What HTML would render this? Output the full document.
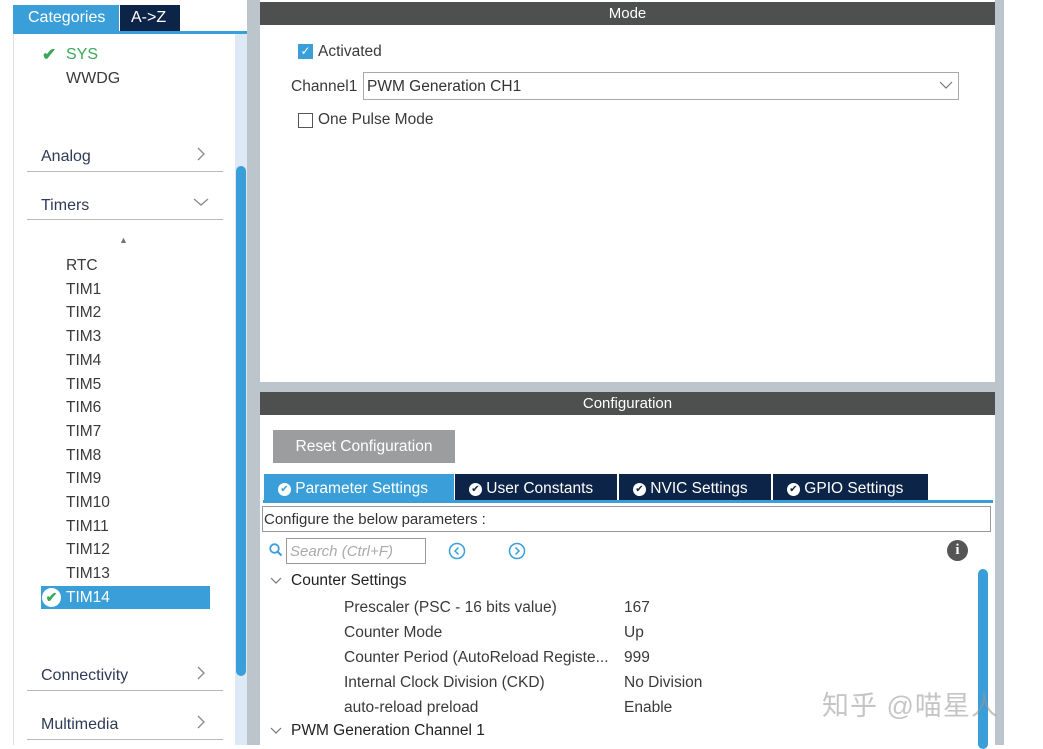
<!DOCTYPE html>
<html><head><meta charset="utf-8"><style>
*{margin:0;padding:0;box-sizing:border-box}
body{width:1043px;height:745px;overflow:hidden;background:#fff;font-family:"Liberation Sans",Arial,sans-serif;position:relative;color:#333}
.a{position:absolute;white-space:nowrap}
.t{font-size:15px;color:#3a3a3a}
.cat{font-size:16px;color:#2f3a56}
.line{position:absolute;height:1px;background:#b8b8b8}
svg.a{overflow:visible}
</style></head><body>
<!-- left panel -->
<div class="a" style="left:13px;top:33px;width:222px;height:712px;background:#fff;border-left:1px solid #e0e0e0"></div>
<div class="a" style="left:13px;top:5px;width:106px;height:26px;background:#3a9fd8;color:#fff;font-size:16px;padding:4px 0 0 15px">Categories</div>
<div class="a" style="left:120px;top:5px;width:60px;height:26px;background:#0c2447;color:#fff;font-size:16px;padding:4px 0 0 11px">A-&gt;Z</div>
<div class="a" style="left:13px;top:31px;width:235px;height:3px;background:#3a9fd8"></div>
<div class="a" style="left:42px;top:45px;font-size:17px;color:#3aa85a;font-weight:bold">✔</div>
<div class="a" style="left:66px;top:46px;font-size:16px;color:#3aa85a">SYS</div>
<div class="a t" style="left:66px;top:70px;font-size:16px">WWDG</div>
<div class="a cat" style="left:41px;top:148px">Analog</div>
<svg class="a" style="left:196px;top:147px" width="10" height="14"><path d="M2 1 L8 7 L2 13" fill="none" stroke="#888" stroke-width="1.3"/></svg>
<div class="line" style="left:27px;top:171px;width:196px"></div>
<div class="a cat" style="left:41px;top:197px">Timers</div>
<svg class="a" style="left:193px;top:197px" width="16" height="10"><path d="M1 2 L8 8 L15 2" fill="none" stroke="#888" stroke-width="1.3"/></svg>
<div class="line" style="left:27px;top:219px;width:196px"></div>
<div class="a" style="left:119px;top:235px;font-size:9px;color:#777">▲</div>
<div class="a t" style="left:66px;top:254px;line-height:23.7px;font-size:15.5px">RTC<br>TIM1<br>TIM2<br>TIM3<br>TIM4<br>TIM5<br>TIM6<br>TIM7<br>TIM8<br>TIM9<br>TIM10<br>TIM11<br>TIM12<br>TIM13</div>
<div class="a" style="left:41px;top:586px;width:169px;height:23px;background:#3a9fd8"></div>
<div class="a" style="left:42px;top:588px;width:19px;height:19px;border-radius:50%;background:#fff;color:#3aa85a;font-size:14px;font-weight:bold;text-align:center;line-height:19px">✔</div>
<div class="a" style="left:66px;top:589px;font-size:15.5px;color:#fff">TIM14</div>
<div class="a cat" style="left:41px;top:667px">Connectivity</div>
<svg class="a" style="left:196px;top:666px" width="10" height="14"><path d="M2 1 L8 7 L2 13" fill="none" stroke="#888" stroke-width="1.3"/></svg>
<div class="line" style="left:27px;top:690px;width:196px"></div>
<div class="a cat" style="left:41px;top:716px">Multimedia</div>
<svg class="a" style="left:196px;top:715px" width="10" height="14"><path d="M2 1 L8 7 L2 13" fill="none" stroke="#888" stroke-width="1.3"/></svg>
<div class="line" style="left:27px;top:739px;width:196px"></div>
<!-- left scrollbar -->
<div class="a" style="left:235px;top:34px;width:12px;height:711px;background:#dde9f4"></div>
<div class="a" style="left:236px;top:166px;width:10px;height:510px;background:#3a9fd8;border-radius:5px"></div>
<div class="a" style="left:247px;top:0;width:13px;height:745px;background:#bcc5cc"></div>
<!-- right panel -->
<div class="a" style="left:260px;top:0;width:735px;height:745px;background:#fff"></div>
<div class="a" style="left:995px;top:0;width:9px;height:745px;background:#bcc5cc"></div>
<div class="a" style="left:260px;top:2px;width:735px;height:23px;background:#4e4f4f;color:#fff;font-size:15px;text-align:center;line-height:24px">Mode</div>
<div class="a" style="left:298px;top:44px;width:15px;height:15px;background:#3a9fd8;color:#fff;font-size:12px;text-align:center;line-height:15px">✓</div>
<div class="a t" style="left:318px;top:43px;font-size:15.5px">Activated</div>
<div class="a t" style="left:291px;top:78px;font-size:15.5px">Channel1</div>
<div class="a" style="left:363px;top:72px;width:596px;height:28px;border:1px solid #aaa;font-size:15.5px;color:#333;padding:5px 0 0 3px">PWM Generation CH1</div>
<svg class="a" style="left:939px;top:81px" width="14" height="8"><path d="M1 1 L7 7 L13 1" fill="none" stroke="#777" stroke-width="1.2"/></svg>
<div class="a" style="left:298px;top:113px;width:15px;height:15px;border:1px solid #555"></div>
<div class="a t" style="left:318px;top:111px;font-size:15.5px">One Pulse Mode</div>
<div class="a" style="left:260px;top:382px;width:735px;height:10px;background:#bcc5cc"></div>
<div class="a" style="left:260px;top:392px;width:735px;height:23px;background:#4e4f4f;color:#fff;font-size:15px;text-align:center;line-height:24px">Configuration</div>
<div class="a" style="left:273px;top:430px;width:182px;height:33px;background:#9b9d9f;color:#fff;font-size:15.5px;text-align:center;line-height:33px">Reset Configuration</div>
<div class="a" style="left:264px;top:474px;width:190px;height:27px;background:#3a9fd8"></div>
<div class="a" style="left:455px;top:474px;width:162px;height:27px;background:#0c2447"></div>
<div class="a" style="left:619px;top:474px;width:152px;height:27px;background:#0c2447"></div>
<div class="a" style="left:773px;top:474px;width:155px;height:27px;background:#0c2447"></div>
<div class="a" style="left:263px;top:500px;width:730px;height:3px;background:#3a9fd8"></div>
<div class="a" style="left:278px;top:480px;font-size:15.5px;color:#fff"><span style="display:inline-block;width:13px;height:13px;border-radius:50%;background:#fff;color:#3a9fd8;font-size:10px;text-align:center;line-height:13px;vertical-align:1px">✔</span>&nbsp;Parameter Settings</div>
<div class="a" style="left:469px;top:480px;font-size:15.5px;color:#fff"><span style="display:inline-block;width:13px;height:13px;border-radius:50%;background:#fff;color:#0c2447;font-size:10px;text-align:center;line-height:13px;vertical-align:1px">✔</span>&nbsp;User Constants</div>
<div class="a" style="left:633px;top:480px;font-size:15.5px;color:#fff"><span style="display:inline-block;width:13px;height:13px;border-radius:50%;background:#fff;color:#0c2447;font-size:10px;text-align:center;line-height:13px;vertical-align:1px">✔</span>&nbsp;NVIC Settings</div>
<div class="a" style="left:787px;top:480px;font-size:15.5px;color:#fff"><span style="display:inline-block;width:13px;height:13px;border-radius:50%;background:#fff;color:#0c2447;font-size:10px;text-align:center;line-height:13px;vertical-align:1px">✔</span>&nbsp;GPIO Settings</div>
<div class="a" style="left:262px;top:506px;width:729px;height:26px;border:1px solid #999;font-size:15px;color:#333;padding:4px 0 0 1px">Configure the below parameters :</div>
<svg class="a" style="left:269px;top:543px" width="14" height="14"><circle cx="5.5" cy="5.5" r="4.3" fill="none" stroke="#3a9fd8" stroke-width="1.8"/><path d="M8.5 8.5 L12.5 12.5" stroke="#3a9fd8" stroke-width="2"/></svg>
<div class="a" style="left:286px;top:538px;width:140px;height:26px;border:1px solid #999;font-size:15px;color:#aaa;font-style:italic;padding:4px 0 0 3px">Search (Ctrl+F)</div>
<svg class="a" style="left:448px;top:542px" width="18" height="18"><circle cx="9" cy="9" r="7.5" fill="none" stroke="#3a9fd8" stroke-width="1.5"/><path d="M10.5 5.5 L7 9 L10.5 12.5" fill="none" stroke="#3a9fd8" stroke-width="1.5"/></svg>
<svg class="a" style="left:508px;top:542px" width="18" height="18"><circle cx="9" cy="9" r="7.5" fill="none" stroke="#3a9fd8" stroke-width="1.5"/><path d="M7.5 5.5 L11 9 L7.5 12.5" fill="none" stroke="#3a9fd8" stroke-width="1.5"/></svg>
<div class="a" style="left:947px;top:540px;width:21px;height:21px;border-radius:50%;background:#555;color:#fff;font-size:15px;font-weight:bold;text-align:center;line-height:21px;font-family:'Liberation Serif',serif">i</div>
<div class="a" style="left:978px;top:569px;width:10px;height:180px;background:#3a9fd8;border-radius:5px"></div>
<svg class="a" style="left:270px;top:577px" width="12" height="8"><path d="M1 1 L6 6 L11 1" fill="none" stroke="#777" stroke-width="1.2"/></svg>
<div class="a t" style="left:291px;top:572px;font-size:15.5px;color:#222">Counter Settings</div>
<div class="a t" style="left:344px;top:595px;line-height:25px;font-size:15.5px">Prescaler (PSC - 16 bits value)<br>Counter Mode<br>Counter Period (AutoReload Registe...<br>Internal Clock Division (CKD)<br>auto-reload preload</div>
<div class="a t" style="left:624px;top:595px;line-height:25px;font-size:15.5px">167<br>Up<br>999<br>No Division<br>Enable</div>
<svg class="a" style="left:270px;top:727px" width="12" height="8"><path d="M1 1 L6 6 L11 1" fill="none" stroke="#777" stroke-width="1.2"/></svg>
<div class="a t" style="left:291px;top:722px;font-size:15.5px;color:#222">PWM Generation Channel 1</div>
<div class="a" style="left:822px;top:684px;font-size:27px;letter-spacing:1px;color:rgba(150,150,150,.55);font-family:'Liberation Sans','Noto Sans CJK SC',sans-serif">知乎 @喵星人</div>
</body></html>
